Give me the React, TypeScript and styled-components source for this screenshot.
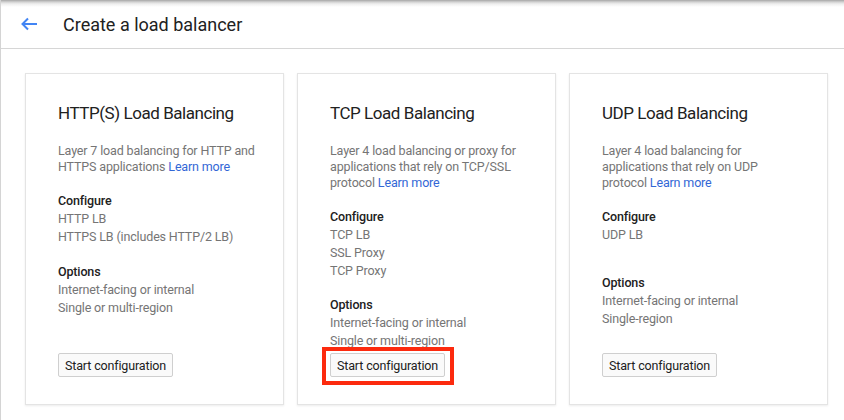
import styled, { createGlobalStyle, css } from "styled-components";

interface Balancer {
    id: string;
    title: string;
    description: string;
    configure: string[];
    options: string[];
    optionsGap: number;
    highlighted?: boolean;
}

const balancers: Balancer[] = [
    {
        id: "http",
        title: "HTTP(S) Load Balancing",
        description: "Layer 7 load balancing for HTTP and HTTPS applications",
        configure: ["HTTP LB", "HTTPS LB (includes HTTP/2 LB)"],
        options: ["Internet-facing or internal", "Single or multi-region"],
        optionsGap: 17,
    },
    {
        id: "tcp",
        title: "TCP Load Balancing",
        description: "Layer 4 load balancing or proxy for applications that rely on TCP/SSL protocol",
        configure: ["TCP LB", "SSL Proxy", "TCP Proxy"],
        options: ["Internet-facing or internal", "Single or multi-region"],
        optionsGap: 16,
        highlighted: true,
    },
    {
        id: "udp",
        title: "UDP Load Balancing",
        description: "Layer 4 load balancing for applications that rely on UDP protocol",
        configure: ["UDP LB"],
        options: ["Internet-facing or internal", "Single-region"],
        optionsGap: 30,
    },
];

const GlobalStyle = createGlobalStyle`
  body {
    margin: 0;
    background: #fff;
    font-family: Roboto, "Liberation Sans", Arial, sans-serif;
    color: #212121;
  }
`;

// small body copy used across the cards
const smallText = css`
  font-size: 12.5px;
  letter-spacing: -0.15px;
`;

export default function App() {
    return (
        <>
            <GlobalStyle />
            <Page>
                <Header>
                    <BackButton aria-label="Back">
                        <svg width="18" height="14" viewBox="0 0 18 14" fill="none">
                            <path d="M17 7H2.5M8 1.5L2.5 7L8 12.5" stroke="#4285f4" strokeWidth="2" />
                        </svg>
                    </BackButton>
                    <PageTitle>Create a load balancer</PageTitle>
                </Header>
                <Cards>
                    {balancers.map((b) => (
                        <Card key={b.id}>
                            <CardTitle>{b.title}</CardTitle>
                            <Description>
                                {b.description} <Link href="#">Learn more</Link>
                            </Description>
                            <Section $top={17}>
                                <SectionTitle>Configure</SectionTitle>
                                {b.configure.map((c) => (
                                    <Item key={c}>{c}</Item>
                                ))}
                            </Section>
                            <Section $top={b.optionsGap}>
                                <SectionTitle>Options</SectionTitle>
                                {b.options.map((o) => (
                                    <Item key={o}>{o}</Item>
                                ))}
                            </Section>
                            <Footer>
                                <ButtonWrap $highlighted={!!b.highlighted}>
                                    <StartButton>Start configuration</StartButton>
                                </ButtonWrap>
                            </Footer>
                        </Card>
                    ))}
                </Cards>
            </Page>
        </>
    );
}

const Page = styled.div`
  min-height: 420px;
  border-left: 1px solid #d4d4d4;
  box-sizing: border-box;
`;

const Header = styled.header`
  display: flex;
  align-items: center;
  height: 48px;
  padding-left: 19px;
  border-bottom: 1px solid #d6d6d6;
  background: linear-gradient(to bottom, #a6a6a6 0px, #d2d2d2 2px, #efefef 4px, #fff 7px);
`;

const BackButton = styled.button`
  display: flex;
  align-items: center;
  justify-content: center;
  padding: 0;
  border: none;
  background: none;
  cursor: pointer;
`;

const PageTitle = styled.h1`
  margin: 0 0 0 25px;
  font-size: 18px;
  font-weight: 400;
  color: #212121;
`;

const Cards = styled.main`
  display: grid;
  grid-template-columns: repeat(3, 259px);
  gap: 13px;
  padding: 24px 0 0 24px;
`;

const Card = styled.section`
  display: flex;
  flex-direction: column;
  padding: 27px 20px 27px 32px;
  border: 1px solid #e4e4e4;
  box-shadow: 0 1px 2px rgba(0, 0, 0, 0.08);
  background: #fff;
`;

const CardTitle = styled.h2`
  margin: 0;
  font-size: 17px;
  letter-spacing: -0.45px;
  line-height: 24px;
  font-weight: 400;
  color: #212121;
`;

const Description = styled.p`
  ${smallText};
  margin: 18px 0 0;
  max-width: 200px;
  line-height: 16px;
  color: #757575;
`;

const Link = styled.a`
  color: #3367d6;
  text-decoration: none;
`;

const Section = styled.div<{ $top: number }>`
  margin-top: ${(p) => p.$top}px;
  display: flex;
  flex-direction: column;
`;

const SectionTitle = styled.div`
  ${smallText};
  line-height: 18px;
  font-weight: 500;
  color: #212121;
`;

const Item = styled.div`
  ${smallText};
  line-height: 18px;
  color: #757575;
`;

const Footer = styled.div`
  margin-top: auto;
  padding-top: 3px;
  display: flex;
`;

const ButtonWrap = styled.div<{ $highlighted: boolean }>`
  position: relative;

  &::after {
    content: "";
    display: ${(p) => (p.$highlighted ? "block" : "none")};
    position: absolute;
    top: -6px;
    left: -8px;
    right: -9px;
    bottom: -8px;
    border: 4px solid #fc2a0e;
    pointer-events: none;
  }
`;

const StartButton = styled.button`
  ${smallText};
  height: 24px;
  padding: 0 6px;
  font-family: Roboto, "Liberation Sans", Arial, sans-serif;
  color: #212121;
  background: #fafafa;
  border: 1px solid #cfcfcf;
  border-radius: 2px;
  cursor: pointer;
`;
